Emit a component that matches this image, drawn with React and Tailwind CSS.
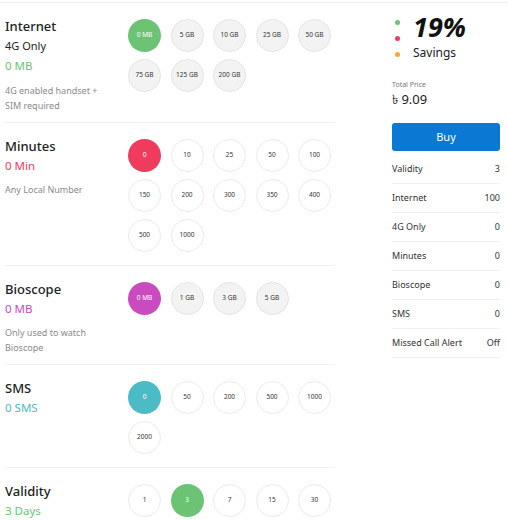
import React from "react";

const SECTIONS = [
  {
    title: "Internet",
    sub: "4G Only",
    value: "0 MB",
    valueColor: "text-[#6cc374]",
    desc: ["4G enabled handset +", "SIM required"],
    options: ["0 MB", "5 GB", "10 GB", "25 GB", "50 GB", "75 GB", "125 GB", "200 GB"],
    selected: 0,
    activeBg: "bg-[#6cc374]",
    filled: true,
  },
  {
    title: "Minutes",
    value: "0 Min",
    valueColor: "text-[#ef3b5e]",
    desc: ["Any Local Number"],
    options: ["0", "10", "25", "50", "100", "150", "200", "300", "350", "400", "500", "1000"],
    selected: 0,
    activeBg: "bg-[#ef3b5e]",
  },
  {
    title: "Bioscope",
    value: "0 MB",
    valueColor: "text-[#c94bbd]",
    desc: ["Only used to watch", "Bioscope"],
    options: ["0 MB", "1 GB", "3 GB", "5 GB"],
    selected: 0,
    activeBg: "bg-[#c94bbd]",
    filled: true,
  },
  {
    title: "SMS",
    value: "0 SMS",
    valueColor: "text-[#4bbcc5]",
    options: ["0", "50", "200", "500", "1000", "2000"],
    selected: 0,
    activeBg: "bg-[#4bbcc5]",
  },
  {
    title: "Validity",
    value: "3 Days",
    valueColor: "text-[#6cc374]",
    options: ["1", "3", "7", "15", "30"],
    selected: 1,
    activeBg: "bg-[#6cc374]",
  },
];

const SUMMARY = [
  ["Validity", "3"],
  ["Internet", "100"],
  ["4G Only", "0"],
  ["Minutes", "0"],
  ["Bioscope", "0"],
  ["SMS", "0"],
  ["Missed Call Alert", "Off"],
];

function Option({ label, active, activeBg, filled }) {
  let cls = "bg-white border border-[#ebebeb] text-[#333]";
  if (active) cls = `${activeBg} text-white border border-transparent`;
  else if (filled) cls = "bg-[#f3f3f3] border border-[#e4e4e4] text-[#333]";
  return (
    <div className={`w-[33px] h-[33px] rounded-full flex items-center justify-center text-[6.5px] leading-none ${cls}`}>
      {label}
    </div>
  );
}

function Section({ s }) {
  return (
    <div className="flex items-start border-b border-[#f0f0f0]">
      <div className="w-[123px] shrink-0 pt-[13px] pb-[9px]">
        <div className="text-[13px] leading-[20px] font-medium text-[#222]">{s.title}</div>
        {s.sub && <div className="text-[11px] leading-[20px] text-[#222]">{s.sub}</div>}
        <div className={`text-[11.5px] leading-[20px] ${s.valueColor}`}>{s.value}</div>
        {s.desc && (
          <div className="mt-[6.5px] text-[9px] leading-[15px] text-[#8a8a8a]">
            {s.desc.map((d) => (
              <div key={d}>{d}</div>
            ))}
          </div>
        )}
      </div>
      <div className="w-[208px] pt-[16px] pb-[13px] flex flex-wrap gap-x-[9.5px] gap-y-[7px]">
        {s.options.map((o, i) => (
          <Option key={o} label={o} active={i === s.selected} activeBg={s.activeBg} filled={s.filled} />
        ))}
      </div>
    </div>
  );
}

export default function App() {
  return (
    <div className="w-[508px] h-[520px] overflow-hidden bg-white text-[#222]" style={{ fontFamily: '"Noto Sans", "DejaVu Sans", sans-serif' }}>
      <div className="h-[3px] border-b border-[#f0f0f0]" />
      <div className="flex">
        <div className="w-[335px] pl-[5px]">
          {SECTIONS.map((s) => (
            <Section key={s.title} s={s} />
          ))}
        </div>
        <div className="ml-[57px] w-[108px]">
          <div className="flex pt-[9px]">
            <div className="ml-[2.5px] pt-[7.5px] flex flex-col gap-[11px]">
              <span className="w-[5px] h-[5px] rounded-full bg-[#6cc374]" />
              <span className="w-[5px] h-[5px] rounded-full bg-[#ef3b5e]" />
              <span className="w-[5px] h-[5px] rounded-full bg-[#f5a83a]" />
            </div>
            <div className="ml-[13.5px]">
              <div className="text-[27px] leading-[30px] font-bold italic text-[#111]">19%</div>
              <div className="mt-[2.5px] text-[12px] leading-[16px] text-[#222]">Savings</div>
            </div>
          </div>
          <div className="mt-[19.5px] text-[7px] leading-[10px] text-[#777]">Total Price</div>
          <div className="mt-[1px] text-[13px] leading-[16px] text-[#222]">৳ 9.09</div>
          <button className="mt-[16px] w-full h-[28px] rounded-[3px] bg-[#0b78d3] text-white text-[11px]">Buy</button>
          <div className="mt-[4px]">
            {SUMMARY.map(([k, v]) => (
              <div key={k} className="h-[29px] flex items-center justify-between border-b border-[#f0f0f0] text-[9px] text-[#333]">
                <span>{k}</span>
                <span>{v}</span>
              </div>
            ))}
          </div>
        </div>
      </div>
    </div>
  );
}
